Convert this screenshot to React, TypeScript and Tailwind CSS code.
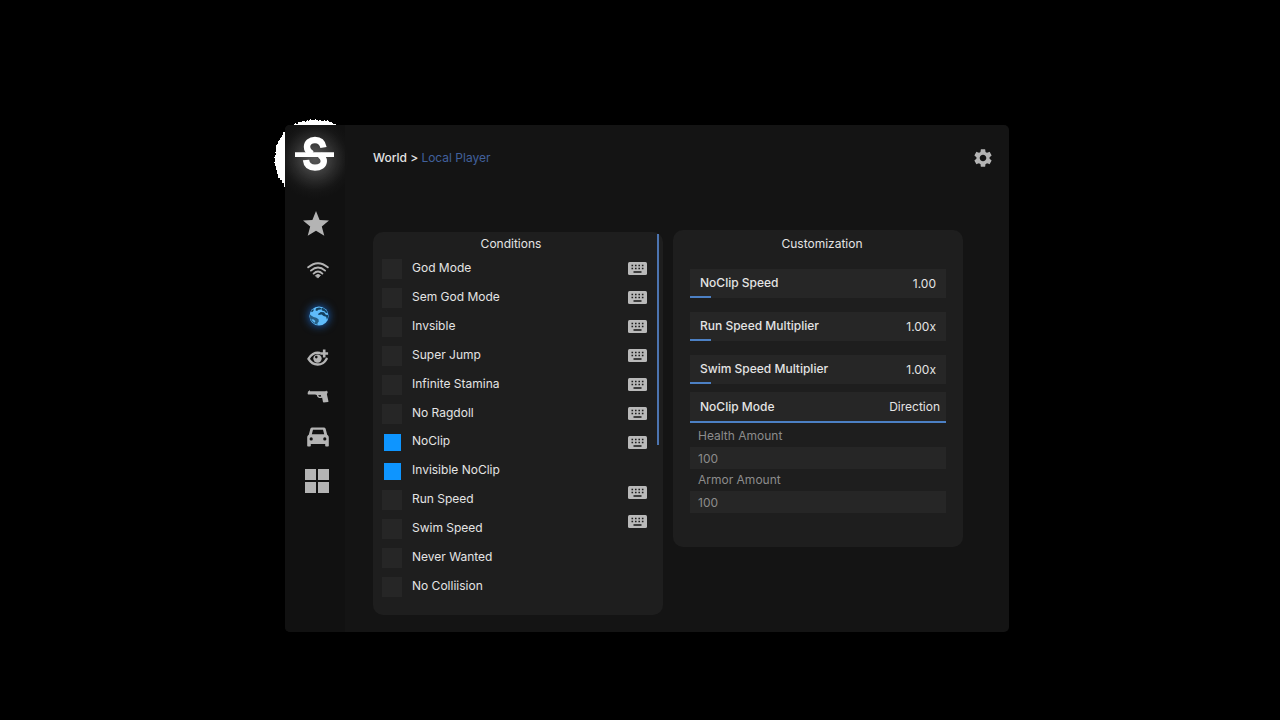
import { useState } from "react";
import type { ReactNode } from "react";
import clsx from "clsx";
import { MdSettings } from "react-icons/md";

type Condition = { id: string; label: string; on?: boolean };

const conditions: Condition[] = [
  { id: "god", label: "God Mode" },
  { id: "semi-god", label: "Sem God Mode" },
  { id: "invisible", label: "Invsible" },
  { id: "super-jump", label: "Super Jump" },
  { id: "stamina", label: "Infinite Stamina" },
  { id: "ragdoll", label: "No Ragdoll" },
  { id: "noclip", label: "NoClip", on: true },
  { id: "invisible-noclip", label: "Invisible NoClip", on: true },
  { id: "run", label: "Run Speed" },
  { id: "swim", label: "Swim Speed" },
  { id: "wanted", label: "Never Wanted" },
  { id: "collision", label: "No Colliision" },
];

// conditions that can be bound to a key, in the two groups they are shown in
const bindGroups = [
  ["God Mode", "Sem God Mode", "Invsible", "Super Jump", "Infinite Stamina", "No Ragdoll", "NoClip"],
  ["Run Speed", "Swim Speed"],
];

const sliders = [
  { id: "noclip-speed", label: "NoClip Speed", unit: "" },
  { id: "run-speed", label: "Run Speed Multiplier", unit: "x" },
  { id: "swim-speed", label: "Swim Speed Multiplier", unit: "x" },
];

const SLIDER_MAX = 12;

function StarIcon() {
  return (
    <svg viewBox="0 0 26 25" className="w-[26px]" fill="currentColor">
      <path d="M13 0l3.6 8.900 9.400.5-7.200 6.100 2.500 9.300L13 19.700l-8.300 5.100 2.500-9.300L0 9.400l9.400-.5z" />
    </svg>
  );
}

function WifiIcon() {
  return (
    <svg viewBox="0 0 22 17" className="w-[22px]" fill="none" stroke="currentColor" strokeWidth="1.9" strokeLinecap="round">
      <path d="M1.2 5.3Q11-2.9 20.8 5.3" />
      <path d="M3.9 8.6Q11 2.3 18.1 8.6" />
      <path d="M6.6 11.6Q11 7.2 15.4 11.6" />
      <path d="M8.700 13.400Q11 11.400 13.300 13.400L11 15.800z" fill="currentColor" strokeWidth="1" strokeLinejoin="round" />
    </svg>
  );
}

function GlobeIcon() {
  return (
    <svg
      viewBox="0 0 20 20"
      className="ml-px size-5 overflow-visible drop-shadow-[0_0_5px_rgba(30,130,255,0.8)]"
    >
      <circle cx="10" cy="10" r="9.600" fill="#5fbcfa" />
      <g fill="#14405f">
        <path d="M7.200 2.200l3-.8 2.600.9-1.200 1.200-2.200.3-1.400 1.300-1.600-.9z" />
        <path d="M13.400 1.700c2.600 1 4.600 3.100 5.300 5.600l-1.900-.6-1.300-1.400-2.500-.7-.6-1.500z" />
        <path d="M9.300 7.800l2.400-1.900 3.300.4 1.800 2.500 2.300.2c.1 1.700-.3 3.300-1.100 4.700l-.9-2.900-2.500-.9-2-1.300-3.300.3z" />
        <path d="M.8 8.200l1.700 1.600 2.100 1.300 2.700.6 2.200 1.500.3 2.300-1.400 1.700.3 1.500c-3.500-.6-6.400-3-7.500-6z" opacity=".75" />
        <path d="M2 5.300l1.600-1.900 1.400.2-.7 1.400-1.300 1.300z" />
      </g>
      <path d="M2.400 13.200l2.200.2 1.700 1.600-.4 1.700C4.400 16 3.100 14.700 2.400 13.200z" fill="#5fbcfa" />
    </svg>
  );
}

function EyePlusIcon() {
  return (
    <svg viewBox="0 0 22 18" className="w-[22px]" fill="none" stroke="currentColor">
      <path d="M12.600 4C7.800 3 3.600 6 1.500 9.900C5.900 17.300 15.500 17.600 19.700 9.700" strokeWidth="2.400" strokeLinecap="round" />
      <circle cx="10.500" cy="9.600" r="4.200" fill="currentColor" stroke="none" />
      <circle cx="9.300" cy="8.100" r="1.300" fill="#111111" stroke="none" />
      <path d="M17.200 0.600v7.800M13.300 4.500h7.800" strokeWidth="2.600" />
    </svg>
  );
}

function GunIcon() {
  return (
    <svg viewBox="0 0 22 13" className="w-[22px]" fill="currentColor">
      <path
        fillRule="evenodd"
        d="M1 1.200h1V.600h1v.600h15.500L19.200.600l.6.700.8.300c.3 1-.4 1.900-.7 2.600l1.600 7.200-.4.700-4.500.4-.6-.6-.9-4.400c-1.200 1-4.500.7-5-1.500L9.800 4.900 8 4.600H1.200L.600 4zM11.200 5.200c.3 1.400 1.700 1.700 3 1.300l-.4-1.400z"
      />
    </svg>
  );
}

function CarIcon() {
  return (
    <svg viewBox="0 0 22 20" className="w-[22px]" fill="currentColor">
      <path
        fillRule="evenodd"
        d="M5.300.5h11.400c1 0 1.700.5 2 1.500l1.500 5.800c1 .6 1.600 1.500 1.600 2.700v8.200c0 .5-.3.800-.8.800h-2c-.5 0-.8-.3-.8-.8V17H3.800v1.700c0 .5-.3.8-.8.8H1c-.5 0-.8-.3-.8-.8v-8.200c0-1.200.6-2.100 1.600-2.700L3.300 2c.3-1 1-1.500 2-1.500zM6 2.800L4.800 7.300h12.400L16 2.800zM4.200 10.300a1.600 1.600 0 100 3.200 1.600 1.600 0 000-3.200zM17.800 10.300a1.600 1.600 0 100 3.200 1.600 1.600 0 000-3.200z"
      />
    </svg>
  );
}

function GridIcon() {
  return (
    <svg viewBox="0 0 24 24" className="w-6" fill="currentColor">
      <path d="M0 0h11v11H0zM13 0h11v11H13zM0 13h11v11H0zM13 13h11v11H13z" />
    </svg>
  );
}

function KeyboardIcon() {
  return (
    <svg viewBox="0 0 19 13" className="h-[13px] w-[19px]">
      <rect width="19" height="13" rx="1.5" fill="#b9b9b9" />
      <path
        d="M3.500 3.500h12M3.500 6.500h12"
        stroke="#1e1e1e"
        strokeWidth="1.600"
        strokeDasharray="1.600 1.860"
      />
      <path d="M5.500 10h8" stroke="#1e1e1e" strokeWidth="1.600" />
    </svg>
  );
}

function Logo() {
  return (
    <svg
      viewBox="0 0 39 36"
      role="img"
      aria-label="S"
      className="h-9 w-[39px] overflow-visible drop-shadow-[0_4px_10px_rgba(255,255,255,0.3)]"
      fill="none"
      stroke="#ffffff"
      strokeWidth="6.400"
    >
      <path d="M28.500 11.500C27.500 6.200 24.600 4 20 4C15.200 4 12 7 12 11C12 14 13.500 16 17 18" />
      <path d="M25 19C27.800 21 28.800 22.500 28.800 25C28.800 29.200 25 31.600 20 31.600C15 31.600 11.600 29.400 11 24" />
      <path d="M0 18.600h39" strokeWidth="4.800" />
    </svg>
  );
}

// rough-edged disc that peeks out behind the corner of the window
function Burst() {
  const points = Array.from({ length: 180 }, (_, i) => {
    const a = (i / 180) * Math.PI * 2;
    const jitter = ((i * 37) % 11) / 5;
    const c = Math.cos(a);
    const s = Math.sin(a);
    const x = 42 + Math.sign(c) * Math.abs(c) ** 0.92 * (41 - jitter);
    const y = 40 + Math.sign(s) * Math.abs(s) ** 0.92 * (40 - jitter);
    return `${x.toFixed(1)},${y.toFixed(1)}`;
  });

  return (
    <svg viewBox="0 0 84 80" className="absolute -left-3 -top-1.5 -z-10 w-[84px]" aria-hidden="true">
      <polygon points={points.join(" ")} fill="#ffffff" shapeRendering="crispEdges" />
    </svg>
  );
}

const navItems: { label: string; size: string; icon: ReactNode }[] = [
  { label: "Favorites", size: "h-12 pr-1", icon: <StarIcon /> },
  { label: "Network", size: "h-[46px]", icon: <WifiIcon /> },
  { label: "World", size: "h-[46px]", icon: <GlobeIcon /> },
  { label: "Visuals", size: "h-[38px]", icon: <EyePlusIcon /> },
  { label: "Weapons", size: "h-[38px]", icon: <GunIcon /> },
  { label: "Vehicles", size: "h-11", icon: <CarIcon /> },
  { label: "Misc", size: "h-11 pr-0.5", icon: <GridIcon /> },
];

function Sidebar() {
  return (
    <aside className="w-[60px] shrink-0 bg-[#111111]">
      <div className="flex h-[74px] items-start justify-center bg-[radial-gradient(circle_at_30px_34px,#3a3a3a_0px,#242424_18px,#151515_32px,#111111_40px)] pr-0.5 pt-[11px]">
        <Logo />
      </div>
      <nav className="flex flex-col pl-1.5 text-[#b4b4b4]">
        {navItems.map((item) => (
          <button
            key={item.label}
            type="button"
            aria-label={item.label}
            className={clsx("flex items-center justify-center", item.size)}
          >
            {item.icon}
          </button>
        ))}
      </nav>
    </aside>
  );
}

function ConditionsCard() {
  const [active, setActive] = useState(
    conditions.filter((item) => item.on).map((item) => item.id),
  );

  const toggle = (id: string) =>
    setActive((prev) =>
      prev.includes(id) ? prev.filter((item) => item !== id) : [...prev, id],
    );

  return (
    <section className="mt-0.5 flex rounded-[10px] bg-[#1e1e1e] pb-3.5 pr-1">
      <div className="min-w-0 flex-1">
        <h2 className="h-[23px] text-center leading-6">Conditions</h2>
        <div className="flex justify-between pl-[9px] pr-0.5">
          <ul className="grid h-[346px] auto-rows-fr">
            {conditions.map((item) => (
              <li key={item.id} className="flex items-center gap-2.5">
                <span className="grid size-5 place-items-center">
                  <input
                    id={item.id}
                    type="checkbox"
                    checked={active.includes(item.id)}
                    onChange={() => toggle(item.id)}
                    className="size-5 appearance-none bg-[#262626] checked:size-[17px] checked:bg-[#0e95ff]"
                  />
                </span>
                <label htmlFor={item.id} className="pb-0.5">
                  {item.label}
                </label>
              </li>
            ))}
          </ul>
          <div className="flex flex-col gap-[37px] pt-[7px]">
            {bindGroups.map((group) => (
              <div key={group[0]} className="flex flex-col gap-4">
                {group.map((name) => (
                  <button key={name} type="button" aria-label={`Bind ${name}`}>
                    <KeyboardIcon />
                  </button>
                ))}
              </div>
            ))}
          </div>
        </div>
      </div>
      <div className="ml-2 mt-0.5 h-[211px] w-0.5 bg-[#4c74b0]" />
    </section>
  );
}

function SliderField({ id, label, unit }: { id: string; label: string; unit: string }) {
  const [value, setValue] = useState(1);
  const fill = (value / SLIDER_MAX) * 100;

  return (
    <div className="flex h-[29px] flex-col bg-[#262626]">
      <div className="flex flex-1 items-center justify-between px-2.5">
        <label htmlFor={id} className="font-medium">
          {label}
        </label>
        <output htmlFor={id} className="pt-0.5">
          {value.toFixed(2)}
          {unit}
        </output>
      </div>
      <input
        id={id}
        type="range"
        min={0}
        max={SLIDER_MAX}
        step={0.01}
        value={value}
        onChange={(e) => setValue(Number(e.target.value))}
        className="h-0.5 w-full appearance-none [&::-webkit-slider-thumb]:w-0 [&::-webkit-slider-thumb]:appearance-none"
        style={{
          background: `linear-gradient(to right, #4c80c4 ${fill}%, transparent ${fill}%)`,
        }}
      />
    </div>
  );
}

function AmountField({ id, label }: { id: string; label: string }) {
  return (
    <div className="flex flex-col text-[#8c8c8c]">
      <label htmlFor={id} className="pl-2 leading-[22px]">
        {label}
      </label>
      <input
        id={id}
        type="text"
        defaultValue="100"
        className="h-[22px] w-full bg-[#262626] px-2 outline-none"
      />
    </div>
  );
}

function CustomizationCard() {
  return (
    <section className="rounded-[10px] bg-[#1e1e1e] px-[17px] pb-[34px]">
      <h2 className="h-[39px] pl-2 text-center leading-7">Customization</h2>
      <div className="flex flex-col gap-3.5">
        {sliders.map((item) => (
          <SliderField key={item.id} {...item} />
        ))}
      </div>
      <div className="mt-2 flex h-[31px] items-center justify-between border-b-2 border-[#4c80c4] bg-[#262626] pl-2.5 pr-1.5">
        <label htmlFor="noclip-mode" className="font-medium">
          NoClip Mode
        </label>
        <select id="noclip-mode" className="appearance-none bg-transparent text-right outline-none [field-sizing:content]">
          <option>Direction</option>
          <option>Camera</option>
        </select>
      </div>
      <div className="pt-0.5">
        <AmountField id="health" label="Health Amount" />
        <AmountField id="armor" label="Armor Amount" />
      </div>
    </section>
  );
}

export default function App() {
  return (
    <div className="flex min-h-screen items-center justify-center bg-black pl-3.5 pt-[37px] font-['Inter',sans-serif] text-xs text-[#e4e4e4]">
      <div className="relative isolate w-full max-w-[724px]">
        <Burst />
        <div className="flex overflow-hidden rounded-[5px] bg-[#141414]">
          <Sidebar />
          <main className="min-w-0 flex-1 pb-[17px]">
            <header className="flex h-[66px] items-center justify-between pl-7 pr-[15px]">
              <nav aria-label="Breadcrumb" className="font-medium">
                <a href="#world">World</a> &gt;{" "}
                <a href="#local-player" className="font-normal text-[#41609c]">
                  Local Player
                </a>
              </nav>
              <button type="button" aria-label="Settings" className="text-[#b4b4b4]">
                <MdSettings className="size-[22px]" />
              </button>
            </header>
            <div className="mt-[39px] grid grid-cols-2 items-start gap-2.5 pl-7 pr-[46px]">
              <ConditionsCard />
              <CustomizationCard />
            </div>
          </main>
        </div>
      </div>
    </div>
  );
}
